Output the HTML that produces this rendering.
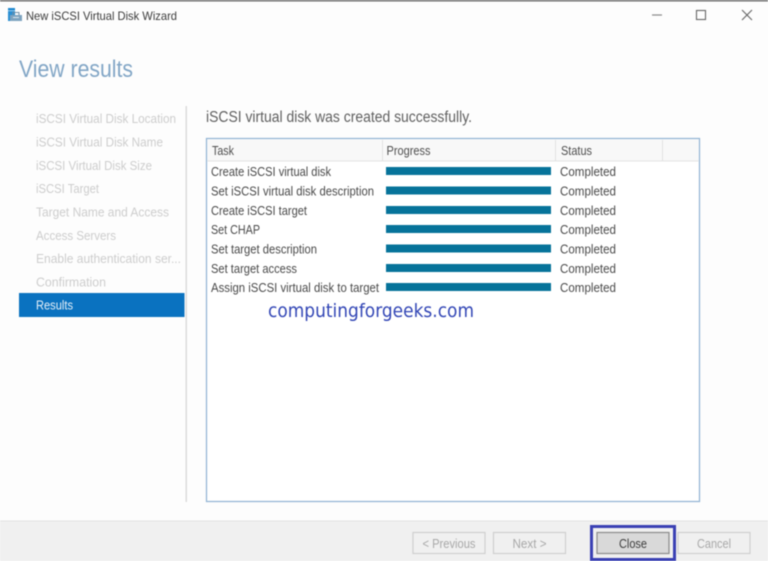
<!DOCTYPE html>
<html lang="en">
<head>
<meta charset="utf-8">
<title>New iSCSI Virtual Disk Wizard</title>
<style>
html,body{margin:0;padding:0;background:#fdfdfd;width:768px;height:561px;overflow:hidden}
svg{display:block;filter:blur(0.4px)}
text{font-family:"Liberation Sans",sans-serif}
.nav{font-size:13px;fill:#cdcdcd}
.row{font-size:12.8px;fill:#4a4a4a}
.hd{font-size:12.8px;fill:#4f4f4f}
.btn{font-size:12.8px;text-anchor:middle}
</style>
</head>
<body>
<svg width="768" height="561" viewBox="0 0 768 561" xmlns="http://www.w3.org/2000/svg">
<rect width="768" height="561" fill="#fdfdfd"/>
<rect width="768" height="1.5" fill="#6e6e6e"/>

<!-- title icon -->
<rect x="8" y="8" width="7" height="2.5" fill="#1f88cf"/>
<rect x="8" y="11" width="7" height="10" fill="#2b8fd3"/>
<rect x="10" y="15" width="12" height="6" fill="#7da3bf"/>
<path d="M13 15v-2.500h6V15" fill="none" stroke="#6f8ea5" stroke-width="1"/>
<rect x="13" y="17" width="6" height="1" fill="#dfe8ef"/>
<text x="26" y="20" font-size="12" fill="#3b3b3b" textLength="151" lengthAdjust="spacingAndGlyphs">New iSCSI Virtual Disk Wizard</text>

<!-- window controls -->
<path d="M652 15h10" stroke="#8a8a8a" stroke-width="1.200"/>
<rect x="696.500" y="10.500" width="9" height="9" fill="none" stroke="#666" stroke-width="1.100"/>
<path d="M742 10l10 10M752 10l-10 10" stroke="#666" stroke-width="1.100"/>

<!-- page title -->
<text x="19" y="77" font-size="24.500" fill="#82a6c6" textLength="114" lengthAdjust="spacingAndGlyphs">View results</text>

<!-- navigation -->
<text class="nav" x="36" y="123" textLength="140" lengthAdjust="spacingAndGlyphs">iSCSI Virtual Disk Location</text>
<text class="nav" x="36" y="146.500" textLength="127" lengthAdjust="spacingAndGlyphs">iSCSI Virtual Disk Name</text>
<text class="nav" x="36" y="170" textLength="116" lengthAdjust="spacingAndGlyphs">iSCSI Virtual Disk Size</text>
<text class="nav" x="36" y="193" textLength="63" lengthAdjust="spacingAndGlyphs">iSCSI Target</text>
<text class="nav" x="36" y="216.500" textLength="133" lengthAdjust="spacingAndGlyphs">Target Name and Access</text>
<text class="nav" x="36" y="240" textLength="80" lengthAdjust="spacingAndGlyphs">Access Servers</text>
<text class="nav" x="36" y="263" textLength="145" lengthAdjust="spacingAndGlyphs">Enable authentication ser...</text>
<text class="nav" x="36" y="286.500" textLength="70" lengthAdjust="spacingAndGlyphs">Confirmation</text>
<rect x="19" y="293" width="165.500" height="24" fill="#0a72c0"/>
<text x="36" y="309.500" font-size="13" fill="#e6f0f8" textLength="37" lengthAdjust="spacingAndGlyphs">Results</text>
<rect x="185.500" y="106" width="1.500" height="396" fill="#dcdcdc"/>

<!-- heading -->
<text x="206" y="122" font-size="15.500" fill="#5f5f5f" textLength="266" lengthAdjust="spacingAndGlyphs">iSCSI virtual disk was created successfully.</text>

<!-- list -->
<rect x="206.500" y="138.500" width="493" height="363" fill="#ffffff" stroke="#8fb2d2" stroke-width="1.200"/>
<rect x="207.500" y="139.500" width="491" height="21.500" fill="#f8f8f8"/>
<rect x="207.500" y="160.500" width="491" height="1" fill="#e4e4e4"/>
<path d="M382.500 140v21M555.500 140v21M662.500 140v21" stroke="#e2e2e2" stroke-width="1"/>
<text class="hd" x="212" y="155" textLength="22" lengthAdjust="spacingAndGlyphs">Task</text>
<text class="hd" x="386.500" y="155" textLength="44" lengthAdjust="spacingAndGlyphs">Progress</text>
<text class="hd" x="561" y="155" textLength="31" lengthAdjust="spacingAndGlyphs">Status</text>

<text class="row" x="211" y="176" textLength="120" lengthAdjust="spacingAndGlyphs">Create iSCSI virtual disk</text>
<text class="row" x="211" y="195.500" textLength="163" lengthAdjust="spacingAndGlyphs">Set iSCSI virtual disk description</text>
<text class="row" x="211" y="215" textLength="96" lengthAdjust="spacingAndGlyphs">Create iSCSI target</text>
<text class="row" x="211" y="234" textLength="49" lengthAdjust="spacingAndGlyphs">Set CHAP</text>
<text class="row" x="211" y="253.500" textLength="106" lengthAdjust="spacingAndGlyphs">Set target description</text>
<text class="row" x="211" y="273" textLength="86" lengthAdjust="spacingAndGlyphs">Set target access</text>
<text class="row" x="211" y="292" textLength="168" lengthAdjust="spacingAndGlyphs">Assign iSCSI virtual disk to target</text>

<g fill="#06739a">
<rect x="386" y="167" width="165" height="8"/>
<rect x="386" y="186.500" width="165" height="8"/>
<rect x="386" y="206" width="165" height="8"/>
<rect x="386" y="225" width="165" height="8"/>
<rect x="386" y="244.500" width="165" height="8"/>
<rect x="386" y="264" width="165" height="8"/>
<rect x="386" y="283" width="165" height="8"/>
</g>

<g>
<text class="row" x="560" y="176" textLength="56" lengthAdjust="spacingAndGlyphs">Completed</text>
<text class="row" x="560" y="195.500" textLength="56" lengthAdjust="spacingAndGlyphs">Completed</text>
<text class="row" x="560" y="215" textLength="56" lengthAdjust="spacingAndGlyphs">Completed</text>
<text class="row" x="560" y="234" textLength="56" lengthAdjust="spacingAndGlyphs">Completed</text>
<text class="row" x="560" y="253.500" textLength="56" lengthAdjust="spacingAndGlyphs">Completed</text>
<text class="row" x="560" y="273" textLength="56" lengthAdjust="spacingAndGlyphs">Completed</text>
<text class="row" x="560" y="292" textLength="56" lengthAdjust="spacingAndGlyphs">Completed</text>
</g>

<!-- watermark -->
<text x="268" y="317" font-size="19" fill="#3145b5" style="font-family:'DejaVu Sans',sans-serif" textLength="206" lengthAdjust="spacingAndGlyphs">computingforgeeks.com</text>

<!-- footer -->
<rect x="0" y="521" width="768" height="40" fill="#f0f0f0"/>
<rect x="0" y="520.500" width="768" height="1" fill="#e2e2e2"/>

<rect x="413" y="532.500" width="72" height="21" fill="#f0f0f0" stroke="#cfcfcf" stroke-width="1.200"/>
<text class="btn" x="449" y="548" fill="#a8a8a8" textLength="53" lengthAdjust="spacingAndGlyphs">&lt; Previous</text>
<rect x="493.500" y="532.500" width="72" height="21" fill="#f0f0f0" stroke="#cfcfcf" stroke-width="1.200"/>
<text class="btn" x="529.500" y="548" fill="#a8a8a8" textLength="34" lengthAdjust="spacingAndGlyphs">Next &gt;</text>

<rect x="597" y="532.500" width="72" height="21" fill="#d9d9d9" stroke="#8a8a8a" stroke-width="1.200"/>
<text class="btn" x="633" y="548" fill="#3d3d3d" textLength="28" lengthAdjust="spacingAndGlyphs">Close</text>
<rect x="591.500" y="526.500" width="83" height="33" fill="none" stroke="#3a40b4" stroke-width="3"/>

<rect x="678" y="532.500" width="72" height="21" fill="#f0f0f0" stroke="#cfcfcf" stroke-width="1.200"/>
<text class="btn" x="714" y="548" fill="#a8a8a8" textLength="34" lengthAdjust="spacingAndGlyphs">Cancel</text>
</svg>
</body>
</html>
